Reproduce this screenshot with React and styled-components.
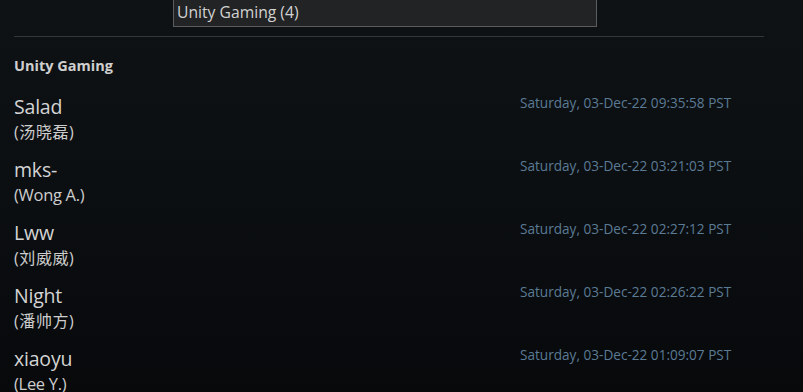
import React from 'react';
import styled, {createGlobalStyle} from "styled-components";

const Global = createGlobalStyle`
html, body {
margin: 0;
padding: 0;
background: #0b0d10;
}
body {
font-family: "Open Sans", "Noto Sans", "Noto Sans CJK SC", sans-serif;
}`;

const Page = styled.div`
width: 803px;
height: 392px;
overflow: hidden;
background: linear-gradient(180deg, #0f1215 0%, #0c0f12 45%, #07090b 100%);
padding: 0 14px;
box-sizing: border-box;`;

const Select = styled.div`
margin-left: 159px;
width: 424px;
height: 27px;
box-sizing: border-box;
background-color: #222324;
border: 1px solid #5c5c5c;
border-top: none;
color: #d2d2d2;
font-size: 15.7px;
line-height: 24px;
padding-left: 3px;`;

const Divider = styled.div`
width: 750px;
height: 1px;
margin-top: 9px;
background-color: #34373a;`;

const GroupTitle = styled.h2`
margin: 19px 0 17px 0;
font-size: 14.5px;
font-weight: 700;
color: #cfcfcf;
letter-spacing: 0;
line-height: 20px;`;

const Row = styled.div`
display: grid;
grid-template-columns: 506px auto;
height: 63px;`;

const Names = styled.div`
display: flex;
flex-direction: column;
margin-top: 1px;`;

const Nick = styled.span`
font-size: 19.5px;
line-height: 26px;
color: #d4d4d4;
letter-spacing: -0.2px;`;

const RealName = styled.span`
font-size: 16.5px;
line-height: 24px;
color: #cdcdcd;
letter-spacing: -0.3px;`;

const CjkName = styled(RealName)`
font-size: 16px;
letter-spacing: 0.6px;`;

const Time = styled.span`
font-size: 13.6px;
line-height: 18px;
margin-top: 1px;
color: #5b7b95;
letter-spacing: 0;`;

const players = [
    {nick: "Salad", real: "(汤晓磊)", cjk: true, time: "Saturday, 03-Dec-22 09:35:58 PST"},
    {nick: "mks-", real: "(Wong A.)", time: "Saturday, 03-Dec-22 03:21:03 PST"},
    {nick: "Lww", real: "(刘威威)", cjk: true, time: "Saturday, 03-Dec-22 02:27:12 PST"},
    {nick: "Night", real: "(潘帅方)", cjk: true, time: "Saturday, 03-Dec-22 02:26:22 PST"},
    {nick: "xiaoyu", real: "(Lee Y.)", time: "Saturday, 03-Dec-22 01:09:07 PST"},
];

const App = () => {
    return (
        <>
            <Global/>
            <Page>
                <Select>Unity Gaming (4)</Select>
                <Divider/>
                <GroupTitle>Unity Gaming</GroupTitle>
                {players.map(p => (
                    <Row key={p.nick}>
                        <Names>
                            <Nick>{p.nick}</Nick>
                            {p.cjk ? <CjkName>{p.real}</CjkName> : <RealName>{p.real}</RealName>}
                        </Names>
                        <Time>{p.time}</Time>
                    </Row>
                ))}
            </Page>
        </>
    );
};

export default App;
